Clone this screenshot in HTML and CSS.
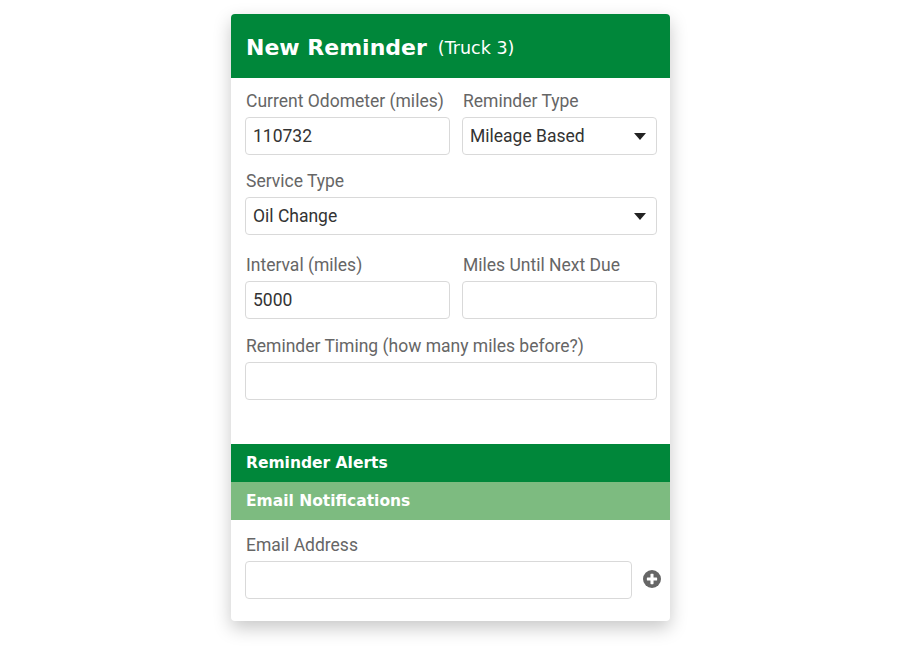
FILE: index.html
```html
<!DOCTYPE html>
<html>
<head>
<meta charset="utf-8">
<link rel="stylesheet" href="styles.css">
</head>
<body>
<div class="card">
  <div class="card-header">
    <span class="title">New Reminder</span>
    <span class="subtitle">(Truck 3)</span>
  </div>
  <div class="card-body">
    <div class="row two row-a">
      <div class="field">
        <label class="label">Current Odometer (miles)</label>
        <div class="input">110732</div>
      </div>
      <div class="field">
        <label class="label">Reminder Type</label>
        <div class="input select">Mileage Based<span class="caret"></span></div>
      </div>
    </div>
    <div class="row row-b">
      <div class="field">
        <label class="label">Service Type</label>
        <div class="input select">Oil Change<span class="caret"></span></div>
      </div>
    </div>
    <div class="row two row-c">
      <div class="field">
        <label class="label">Interval (miles)</label>
        <div class="input">5000</div>
      </div>
      <div class="field">
        <label class="label">Miles Until Next Due</label>
        <div class="input"></div>
      </div>
    </div>
    <div class="row">
      <div class="field">
        <label class="label">Reminder Timing (how many miles before?)</label>
        <div class="input"></div>
      </div>
    </div>
  </div>
  <div class="bar bar-dark">Reminder Alerts</div>
  <div class="bar bar-light">Email Notifications</div>
  <div class="card-body email-body">
    <div class="field">
      <label class="label">Email Address</label>
      <div class="email-row">
        <div class="input"></div>
        <svg class="add" width="18" height="18" viewBox="0 0 20 20">
          <circle cx="10" cy="10" r="10" fill="#666"/>
          <rect x="8.3" y="4.3" width="3.4" height="11.4" rx="0.6" fill="#fff"/>
          <rect x="4.3" y="8.3" width="11.4" height="3.4" rx="0.6" fill="#fff"/>
        </svg>
      </div>
    </div>
  </div>
</div>
</body>
</html>
```
FILE: styles.css
```css
html, body {
  margin: 0;
  padding: 0;
  background: #fff;
}
body {
  padding-top: 14px;
  padding-bottom: 36px;
  min-height: 100vh;
  box-sizing: border-box;
  font-family: Roboto, "Liberation Sans", sans-serif;
}
.card {
  width: 439px;
  margin-left: 231px;
  background: #fff;
  border-radius: 4px;
  overflow: hidden;
  box-shadow: 0 7px 18px rgba(0,0,0,0.22);
}
.card-header {
  height: 64px;
  background: #00873a;
  color: #fff;
  display: flex;
  align-items: center;
  padding-left: 15px;
  padding-top: 3px;
  box-sizing: border-box;
}
.title {
  font-family: "DejaVu Sans", sans-serif;
  font-weight: 700;
  font-size: 22px;
}
.subtitle {
  font-family: "DejaVu Sans", sans-serif;
  font-size: 17.5px;
  margin-left: 11px;
  padding-top: 1px;
}
.card-body {
  padding: 13px 13px 44px 14px;
}
.row-a {
  margin-bottom: 16px;
}
.row-b {
  margin-bottom: 20px;
}
.row-c {
  margin-bottom: 17px;
}
.row.two {
  display: flex;
  gap: 12px;
}
.row.two .field:first-child {
  width: 205px;
  flex: none;
}
.row.two .field:last-child {
  flex: 1;
}
.label {
  display: block;
  color: #666;
  font-size: 17.5px;
  line-height: 21px;
  margin-bottom: 5px;
  padding-left: 1px;
}
.input {
  height: 38px;
  box-sizing: border-box;
  border: 1px solid #d9d9d9;
  border-radius: 4px;
  padding: 0 7px;
  display: flex;
  align-items: center;
  font-size: 17.5px;
  color: #333;
}
.select {
  justify-content: space-between;
  padding-right: 10px;
}
.caret {
  width: 0;
  height: 0;
  border-left: 6.7px solid transparent;
  border-right: 6.7px solid transparent;
  border-top: 7.5px solid #222;
}
.bar {
  height: 38px;
  display: flex;
  align-items: center;
  padding-left: 15px;
  color: #fff;
  font-family: "DejaVu Sans", sans-serif;
  font-weight: 700;
  font-size: 15.5px;
}
.bar-dark {
  background: #00873a;
}
.bar-light {
  background: #7dbb80;
}
.email-body {
  padding-top: 15px;
  padding-bottom: 22px;
}
.email-row {
  display: flex;
  align-items: center;
}
.email-row .input {
  width: 387px;
  flex: none;
}
.add {
  flex: none;
  margin-left: 11px;
  margin-bottom: 3px;
}
```
